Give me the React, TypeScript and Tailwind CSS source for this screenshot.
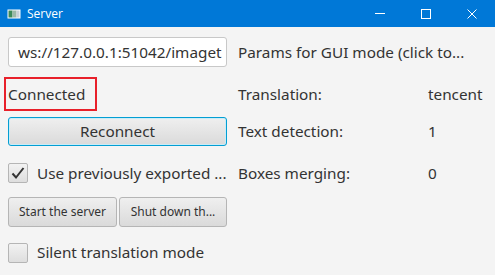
import { useState } from "react";

const font = "font-['Noto_Sans','Liberation_Sans',sans-serif]";

const Check = ({ checked, label, onToggle }: { checked: boolean; label: string; onToggle: () => void }) => (
    <button onClick={onToggle} className="flex items-center gap-[9px] h-full">
        <span className="w-[20px] h-[20px] rounded-[2px] border border-[#b5b5b5] bg-gradient-to-b from-[#f2f2f2] to-[#dedede] flex items-center justify-center">
            {checked && (
                <svg width="14" height="14" viewBox="0 0 14 14">
                    <path d="M1.5 7.5 L5 11.5 L12.5 2" fill="none" stroke="#333" strokeWidth="2" />
                </svg>
            )}
        </span>
        <span className="text-[15.3px] text-[#333]">{label}</span>
    </button>
);

const App = () => {
    const [usePrev, setUsePrev] = useState(true);
    const [silent, setSilent] = useState(false);

    return (
        <div className={`w-[495px] h-[275px] bg-[#f4f4f4] overflow-hidden ${font}`}>
            {/* title bar */}
            <div className="h-[27px] bg-[#0078d7] flex items-center text-white">
                <svg width="14" height="10" viewBox="0 0 14 10" className="ml-[7px]">
                    <rect x="0.5" y="0.5" width="13" height="9" fill="#fff" />
                    <rect x="1.5" y="1.5" width="4" height="7" fill="#3c8a5a" />
                    <rect x="5.5" y="1.5" width="4" height="7" fill="#9bb8a8" />
                    <rect x="9.5" y="1.5" width="3" height="7" fill="#c8d0d8" />
                </svg>
                <span className="ml-[6px] text-[12px] font-['Open_Sans',sans-serif]">Server</span>
                <div className="ml-auto flex items-center h-full">
                    <div className="w-[46px] h-full flex items-center justify-center">
                        <div className="w-[10px] h-[1px] bg-white" />
                    </div>
                    <div className="w-[46px] h-full flex items-center justify-center">
                        <div className="w-[10px] h-[10px] border border-white" />
                    </div>
                    <div className="w-[46px] h-full flex items-center justify-center">
                        <svg width="10" height="10" viewBox="0 0 10 10">
                            <path d="M0.5 0.5 L9.5 9.5 M9.5 0.5 L0.5 9.5" stroke="#fff" strokeWidth="1" />
                        </svg>
                    </div>
                </div>
            </div>

            <div className="pl-[8px] text-[15.3px] text-[#333]">
                <div className="mt-[10px] h-[30px] flex items-center">
                    <div className="w-[219px] h-full rounded-[3px] border border-[#c8c8c8] bg-white flex items-center pl-[9px] overflow-hidden whitespace-nowrap">
                        ws://127.0.0.1:51042/imaget
                    </div>
                    <span className="ml-[11px]">Params for GUI mode (click to...</span>
                </div>

                <div className="mt-[10px] h-[34px] flex items-center">
                    <div className="w-[219px] h-full">
                        <div className="-ml-[4px] w-[93px] h-full border-2 border-[#e8202a] flex items-center pl-[2px]">
                            Connected
                        </div>
                    </div>
                    <span className="ml-[11px] w-[190px]">Translation:</span>
                    <span>tencent</span>
                </div>

                <div className="mt-[6px] h-[29px] flex items-center">
                    <button className="w-[219px] h-full rounded-[3px] border border-[#039ed3] bg-gradient-to-b from-[#efefef] to-[#dadada] shadow-[inset_0_0_0_1px_#c9ecf7]">
                        Reconnect
                    </button>
                    <span className="ml-[11px] w-[190px]">Text detection:</span>
                    <span>1</span>
                </div>

                <div className="mt-[17px] h-[20px] flex items-center">
                    <div className="w-[219px] h-full">
                        <Check checked={usePrev} label="Use previously exported ..." onToggle={() => setUsePrev(!usePrev)} />
                    </div>
                    <span className="ml-[11px] w-[190px]">Boxes merging:</span>
                    <span>0</span>
                </div>

                <div className="mt-[14px] h-[30px] flex items-center gap-[2px] text-[12px]">
                    <button className="w-[109px] h-full rounded-[3px] border border-[#b5b5b5] bg-gradient-to-b from-[#efefef] to-[#dadada]">
                        Start the server
                    </button>
                    <button className="w-[108px] h-full rounded-[3px] border border-[#b5b5b5] bg-gradient-to-b from-[#efefef] to-[#dadada]">
                        Shut down th...
                    </button>
                </div>

                <div className="mt-[15px] h-[21px] flex items-center">
                    <Check checked={silent} label="Silent translation mode" onToggle={() => setSilent(!silent)} />
                </div>
            </div>
        </div>
    );
};

export default App;
